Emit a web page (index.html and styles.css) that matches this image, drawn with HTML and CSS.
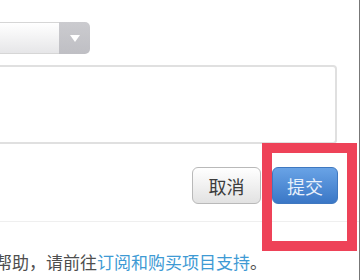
FILE: index.html
```html
<!DOCTYPE html>
<html lang="zh-CN">
<head>
    <meta charset="UTF-8">
    <meta name="viewport" content="width=device-width, initial-scale=1.0">
    <title>提交反馈</title>
    <link rel="stylesheet" href="styles.css">
</head>
<body>
    <div class="page">
        <div class="toolbar">
            <div class="select">
                <div class="select-value"></div>
                <div class="select-arrow"><span class="triangle"></span></div>
            </div>
        </div>
        <div class="editor"></div>
        <div class="actions">
            <button class="btn btn-cancel">取消</button>
            <button class="btn btn-submit">提交</button>
        </div>
        <p class="help">帮助，请前往<a href="#">订阅和购买项目支持</a>。</p>
        <div class="highlight"></div>
        <div class="edge"></div>
    </div>
</body>
</html>
```

FILE: styles.css
```css
html, body {
    margin: 0;
    padding: 0;
    background: #fff;
}

body {
    font-family: "Noto Sans CJK SC", "Noto Sans", sans-serif;
    width: 360px;
    height: 280px;
    overflow: hidden;
}

.page {
    position: relative;
    width: 360px;
    height: 280px;
    overflow: hidden;
}

.toolbar {
    height: 65px;
    padding-top: 22px;
    box-sizing: border-box;
}

.select {
    display: flex;
    width: 200px;
    height: 32px;
    margin-left: -110px;
}

.select-value {
    flex: 1;
    border: 1px solid #d6d6d6;
    border-right: none;
    border-radius: 5px 0 0 5px;
    background: linear-gradient(#ffffff, #e6e6e8);
}

.select-arrow {
    width: 31px;
    display: flex;
    align-items: center;
    justify-content: center;
    background: linear-gradient(#cbcbcf, #bfbfc4);
    border-radius: 0 5px 5px 0;
}

.triangle {
    width: 0;
    height: 0;
    border-left: 5px solid transparent;
    border-right: 5px solid transparent;
    border-top: 7px solid #fff;
}

.editor {
    height: 79px;
    width: 347px;
    margin-left: -10px;
    box-sizing: border-box;
    border: 2px solid #e0e0e0;
    border-radius: 0 4px 4px 4px;
}

.actions {
    display: flex;
    justify-content: flex-end;
    gap: 11px;
    height: 78px;
    box-sizing: border-box;
    padding: 23px 22px 0 0;
    border-bottom: 1px solid #efefef;
}

.btn {
    height: 37px;
    padding: 0;
    font-family: inherit;
    font-size: 18px;
    border-radius: 6px;
}

.btn-cancel {
    width: 69px;
    color: #3c3c3c;
    border: 1px solid #b9b9b9;
    background: linear-gradient(#ffffff, #e2e2e2);
}

.btn-submit {
    width: 66px;
    color: #e8f0fb;
    border: 1px solid #3f78c0;
    background: linear-gradient(#69a3e6, #3a77c6);
}

.help {
    margin: 28px 0 0 -5px;
    font-size: 17px;
    line-height: 24px;
    color: #4e4e4e;
    white-space: nowrap;
}

.help a {
    color: #3e9ad4;
    text-decoration: none;
}

.highlight {
    position: absolute;
    left: 262px;
    top: 143px;
    width: 95px;
    height: 108px;
    box-sizing: border-box;
    border: 10px solid #ee4258;
}

.edge {
    position: absolute;
    right: 0;
    top: 0;
    width: 1px;
    height: 280px;
    background: #777;
}
```
